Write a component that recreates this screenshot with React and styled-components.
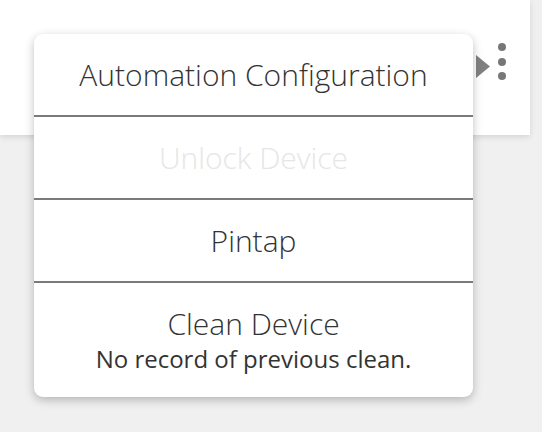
import React from "react";
import styled, { createGlobalStyle } from "styled-components";

const GlobalStyle = createGlobalStyle`
  html, body {
    margin: 0;
    padding: 0;
    background: #f0f0f0;
    font-family: "Open Sans", "Liberation Sans", sans-serif;
  }
`;

const Page = styled.div`
  position: relative;
  width: 542px;
  height: 432px;
  overflow: hidden;
`;

const Card = styled.div`
  width: 530px;
  height: 135px;
  background: #fff;
  box-shadow: 0 2px 6px rgba(0, 0, 0, 0.12);
  display: flex;
  justify-content: flex-end;
  align-items: flex-start;
  padding-top: 43px;
  box-sizing: border-box;
`;

const Kebab = styled.div`
  display: flex;
  align-items: flex-start;
  gap: 7px;
  margin-right: 23px;
`;

const Arrow = styled.svg`
  margin-top: 12px;
`;

const Menu = styled.div`
  position: absolute;
  left: 34px;
  top: 34px;
  width: 439px;
  background: #fff;
  border-radius: 9px;
  box-shadow: 0 3px 10px rgba(0, 0, 0, 0.25);
  overflow: hidden;
`;

const Item = styled.div`
  height: ${(p) => (p.$tall ? "114px" : "81px")};
  display: flex;
  flex-direction: column;
  align-items: center;
  justify-content: center;
  border-bottom: ${(p) => (p.$last ? "none" : "2px solid #7a7a7a")};
  color: ${(p) => (p.$disabled ? "#e6e6e6" : "#333")};
  cursor: ${(p) => (p.$disabled ? "default" : "pointer")};
`;

const Title = styled.div`
  font-size: 30px;
  font-weight: 300;
  line-height: 38px;
`;

const Sub = styled.div`
  font-size: 24px;
  font-weight: 400;
  line-height: 32px;
  color: #333;
`;

const items = [
  { title: "Automation Configuration" },
  { title: "Unlock Device", disabled: true },
  { title: "Pintap" },
  { title: "Clean Device", sub: "No record of previous clean.", tall: true },
];

export default function App() {
  return (
    <Page>
      <GlobalStyle />
      <Card>
        <Kebab>
          <Arrow width="14" height="23" viewBox="0 0 14 23">
            <path d="M0 0 L14 11.5 L0 23 Z" fill="#808080" />
          </Arrow>
          <svg width="10" height="40" viewBox="0 0 10 40">
            <circle cx="5" cy="4" r="4" fill="#777" />
            <circle cx="5" cy="19" r="4" fill="#777" />
            <circle cx="5" cy="33" r="4" fill="#777" />
          </svg>
        </Kebab>
      </Card>
      <Menu>
        {items.map((it, i) => (
          <Item
            key={it.title}
            $disabled={it.disabled}
            $tall={it.tall}
            $last={i === items.length - 1}
          >
            <Title>{it.title}</Title>
            {it.sub && <Sub>{it.sub}</Sub>}
          </Item>
        ))}
      </Menu>
    </Page>
  );
}
